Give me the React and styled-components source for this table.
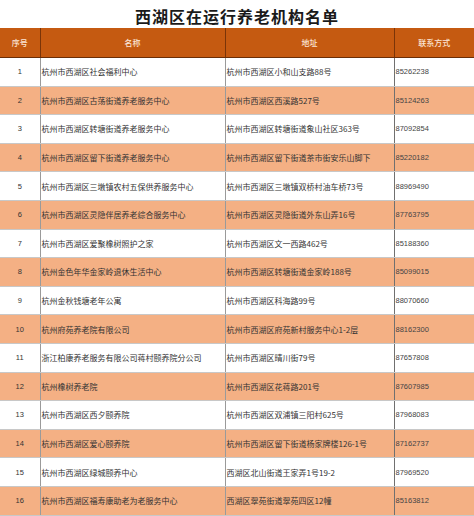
import styled, { createGlobalStyle } from 'styled-components';

const rows = [
  ['杭州市西湖区社会福利中心', '杭州市西湖区小和山支路88号', '85262238'],
  ['杭州市西湖区古荡街道养老服务中心', '杭州市西湖区西溪路527号', '85124263'],
  ['杭州市西湖区转塘街道养老服务中心', '杭州市西湖区转塘街道象山社区363号', '87092854'],
  ['杭州市西湖区留下街道养老服务中心', '杭州市西湖区留下街道茶市街安乐山脚下', '85220182'],
  ['杭州市西湖区三墩镇农村五保供养服务中心', '杭州市西湖区三墩镇双桥村油车桥73号', '88969490'],
  ['杭州市西湖区灵隐伴居养老综合服务中心', '杭州市西湖区灵隐街道外东山弄16号', '87763795'],
  ['杭州市西湖区爱聚橡树照护之家', '杭州市西湖区文一西路462号', '85188360'],
  ['杭州金色年华金家岭退休生活中心', '杭州市西湖区转塘街道金家岭188号', '85099015'],
  ['杭州金秋钱塘老年公寓', '杭州市西湖区科海路99号', '88070660'],
  ['杭州府苑养老院有限公司', '杭州市西湖区府苑新村服务中心1-2层', '88162300'],
  ['浙江柏康养老服务有限公司蒋村颐养院分公司', '杭州市西湖区晴川街79号', '87657808'],
  ['杭州橡树养老院', '杭州市西湖区花蒋路201号', '87607985'],
  ['杭州市西湖区西夕颐养院', '杭州市西湖区双浦镇三阳村625号', '87968083'],
  ['杭州市西湖区爱心颐养院', '杭州市西湖区留下街道杨家牌楼126-1号', '87162737'],
  ['杭州市西湖区绿城颐养中心', '西湖区北山街道王家弄1号19-2', '87969520'],
  ['杭州市西湖区福寿康助老为老服务中心', '西湖区翠苑街道翠苑四区12幢', '85163812'],
];

export default function App() {
  return (
    <>
      <GlobalStyle />
      <Page>
        <Title>西湖区在运行养老机构名单</Title>
        <Table>
          <colgroup>
            <col style={{ width: 40 }} />
            <col style={{ width: 185 }} />
            <col style={{ width: 169 }} />
            <col style={{ width: 80 }} />
          </colgroup>
          <thead>
            <tr>
              <HeadCell>序号</HeadCell>
              <HeadCell>名称</HeadCell>
              <HeadCell>地址</HeadCell>
              <HeadCell>联系方式</HeadCell>
            </tr>
          </thead>
          <tbody>
            {rows.map((r, i) => (
              <Row key={i} $shaded={i % 2 === 1}>
                <IndexCell>{i + 1}</IndexCell>
                <Cell>{r[0]}</Cell>
                <Cell>{r[1]}</Cell>
                <PhoneCell>{r[2]}</PhoneCell>
              </Row>
            ))}
          </tbody>
        </Table>
      </Page>
    </>
  );
}

const GlobalStyle = createGlobalStyle`
  body {
    margin: 0;
    background: #ffffff;
    font-family: 'Liberation Sans', 'Noto Sans CJK SC', sans-serif;
  }
`;

const Page = styled.div`
  width: 474px;
  height: 516px;
  overflow: hidden;
`;

const Title = styled.h1`
  margin: 0;
  height: 28px;
  padding-top: 3px;
  box-sizing: border-box;
  text-align: center;
  font-family: 'Noto Sans CJK SC', sans-serif;
  font-size: 16px;
  letter-spacing: 1px;
  font-weight: 700;
  line-height: 26px;
  color: #1a1a1a;
`;

const Table = styled.table`
  width: 474px;
  table-layout: fixed;
  border-collapse: collapse;
`;

const HeadCell = styled.th`
  height: 29px;
  padding: 0;
  background: #c55a11;
  border-left: 1px solid #7a3408;
  border-bottom: 1px solid #6b2e07;
  color: #fbe5d6;
  font-family: 'Noto Sans CJK SC', sans-serif;
  font-size: 8px;
  font-weight: 500;
  text-align: center;
  &:first-child {
    border-left: none;
  }
`;

const Row = styled.tr`
  height: 28.6px;
  background: ${(p) => (p.$shaded ? '#f4b084' : '#ffffff')};
`;

const Cell = styled.td`
  padding: 0 0 0 1px;
  border-left: 1px solid #9a9a9a;
  border-bottom: 1px solid #c8c8c8;
  font-family: 'Noto Sans CJK SC', sans-serif;
  font-size: 8px;
  color: #333;
  white-space: nowrap;
  overflow: hidden;
`;

const IndexCell = styled(Cell)`
  border-left: none;
  padding: 0;
  text-align: center;
  font-family: 'Liberation Sans', sans-serif;
  font-size: 7.5px;
`;

const PhoneCell = styled(Cell)`
  border-left-color: #707070;
  font-family: 'Liberation Sans', sans-serif;
  font-size: 7.5px;
  color: #444;
`;
